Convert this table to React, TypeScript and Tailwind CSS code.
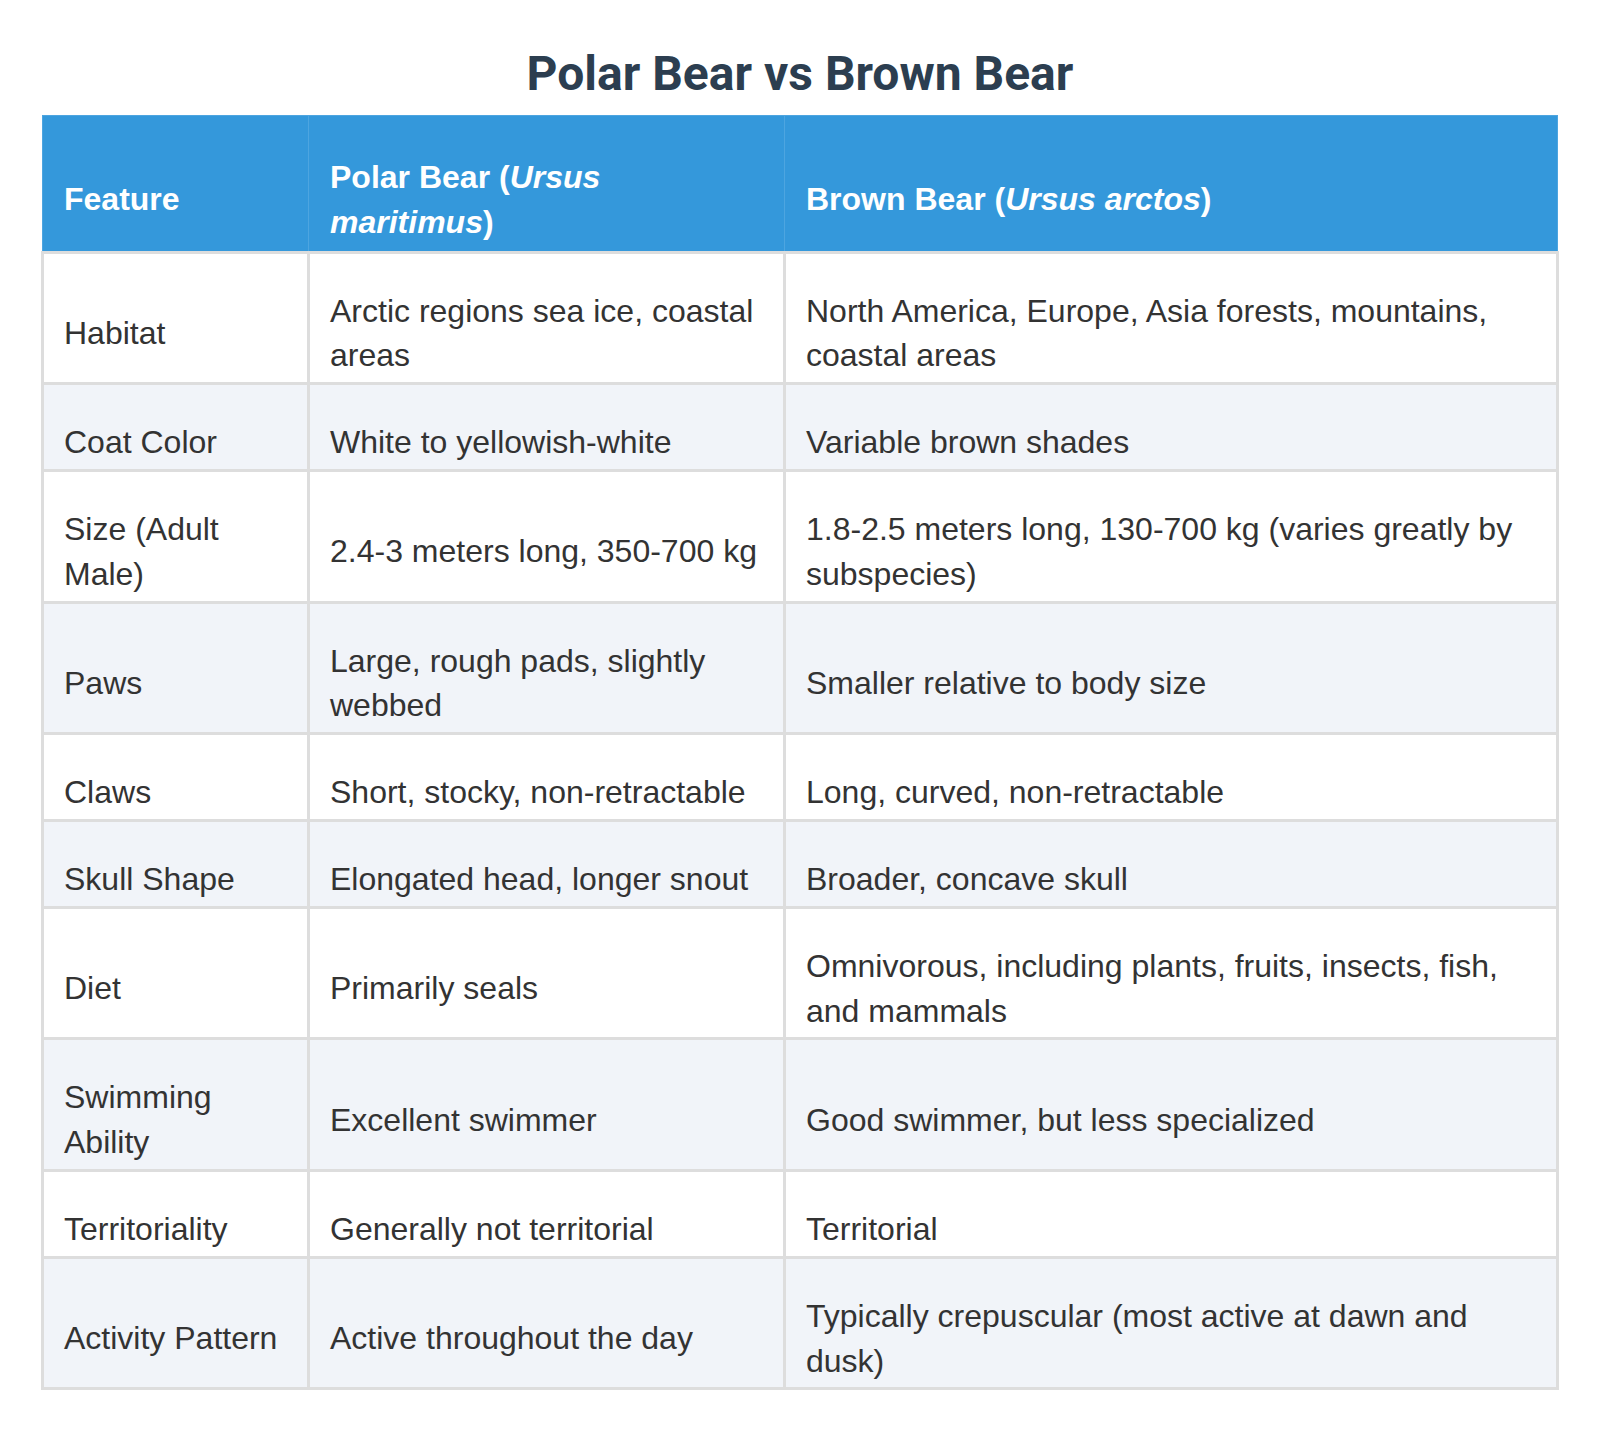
const rows: [string, string, string][] = [
  ["Habitat", "Arctic regions sea ice, coastal areas", "North America, Europe, Asia forests, mountains, coastal areas"],
  ["Coat Color", "White to yellowish-white", "Variable brown shades"],
  ["Size (Adult Male)", "2.4-3 meters long, 350-700 kg", "1.8-2.5 meters long, 130-700 kg (varies greatly by subspecies)"],
  ["Paws", "Large, rough pads, slightly webbed", "Smaller relative to body size"],
  ["Claws", "Short, stocky, non-retractable", "Long, curved, non-retractable"],
  ["Skull Shape", "Elongated head, longer snout", "Broader, concave skull"],
  ["Diet", "Primarily seals", "Omnivorous, including plants, fruits, insects, fish, and mammals"],
  ["Swimming Ability", "Excellent swimmer", "Good swimmer, but less specialized"],
  ["Territoriality", "Generally not territorial", "Territorial"],
  ["Activity Pattern", "Active throughout the day", "Typically crepuscular (most active at dawn and dusk)"],
];

const App = () => {
  return (
    <div className="min-h-[1432px] bg-white px-[41px] pt-[46px] font-['Liberation_Sans',Arial,sans-serif]">
      <h1 className="mb-[13px] text-center font-['Roboto',sans-serif] text-[48px] font-bold leading-[56px] text-[#2c3e50]">
        Polar Bear vs Brown Bear
      </h1>
      <table className="w-full table-fixed border-collapse text-[32px] leading-[1.4] text-[#333]">
        <colgroup>
          <col className="w-[266px]" />
          <col className="w-[476px]" />
          <col />
        </colgroup>
        <thead>
          <tr className="bg-[#3498db] text-left font-bold text-white">
            <th className="border border-[#4da5e0] px-[21px] pt-[39px] pb-[6px] align-middle">Feature</th>
            <th className="border border-[#4da5e0] px-[21px] pt-[39px] pb-[6px] align-middle">
              Polar Bear (<i>Ursus maritimus</i>)
            </th>
            <th className="border border-[#4da5e0] px-[21px] pt-[39px] pb-[6px] align-middle">
              Brown Bear (<i>Ursus arctos</i>)
            </th>
          </tr>
        </thead>
        <tbody>
          {rows.map((r, i) => (
            <tr key={r[0]} className={i % 2 === 1 ? "bg-[#f1f4f9]" : "bg-white"}>
              {r.map((c) => (
                <td key={c} className="border-[3px] border-[#ddd] px-5 pt-[35px] pb-[4px] align-middle">
                  {c}
                </td>
              ))}
            </tr>
          ))}
        </tbody>
      </table>
    </div>
  );
};

export default App;
